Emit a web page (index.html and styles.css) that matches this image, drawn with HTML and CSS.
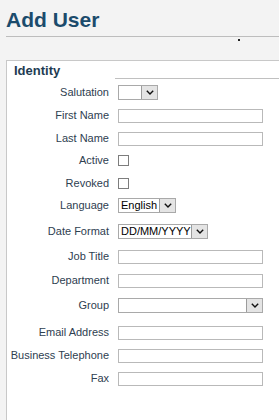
FILE: index.html
```html
<!DOCTYPE html>
<html lang="en">
<head>
    <meta charset="UTF-8">
    <meta name="viewport" content="width=device-width, initial-scale=1.0">
    <title>Add User</title>
    <link rel="stylesheet" href="styles.css">
</head>
<body>
    <h1 class="page-title">Add User</h1>
    <div class="stray"><span class="dot"></span></div>

    <div class="panel">
        <div class="legend">
            <div class="legend-text">Identity</div>
            <div class="legend-rule"></div>
        </div>

        <div class="row">
            <label class="lbl">Salutation</label>
            <div class="select sal">
                <span class="select-value"></span>
                <span class="select-arrow"><svg width="8" height="5" viewBox="0 0 8 5"><path d="M0.8 0.8 L4 4 L7.2 0.8" fill="none" stroke="#111" stroke-width="1.4"/></svg></span>
            </div>
        </div>
        <div class="row">
            <label class="lbl">First Name</label>
            <div class="text"></div>
        </div>
        <div class="row">
            <label class="lbl">Last Name</label>
            <div class="text"></div>
        </div>
        <div class="row gap-7">
            <label class="lbl">Active</label>
            <div class="check"></div>
        </div>
        <div class="row">
            <label class="lbl">Revoked</label>
            <div class="check"></div>
        </div>
        <div class="row gap-7">
            <label class="lbl">Language</label>
            <div class="select lang">
                <span class="select-value">English</span>
                <span class="select-arrow"><svg width="8" height="5" viewBox="0 0 8 5"><path d="M0.8 0.8 L4 4 L7.2 0.8" fill="none" stroke="#111" stroke-width="1.4"/></svg></span>
            </div>
        </div>
        <div class="row gap-11">
            <label class="lbl">Date Format</label>
            <div class="select datefmt">
                <span class="select-value">DD/MM/YYYY</span>
                <span class="select-arrow"><svg width="8" height="5" viewBox="0 0 8 5"><path d="M0.8 0.8 L4 4 L7.2 0.8" fill="none" stroke="#111" stroke-width="1.4"/></svg></span>
            </div>
        </div>
        <div class="row gap-10">
            <label class="lbl">Job Title</label>
            <div class="text"></div>
        </div>
        <div class="row gap-9">
            <label class="lbl">Department</label>
            <div class="text"></div>
        </div>
        <div class="row gap-10">
            <label class="lbl">Group</label>
            <div class="select group">
                <span class="select-value"></span>
                <span class="select-arrow"><svg width="8" height="5" viewBox="0 0 8 5"><path d="M0.8 0.8 L4 4 L7.2 0.8" fill="none" stroke="#111" stroke-width="1.4"/></svg></span>
            </div>
        </div>
        <div class="row gap-12">
            <label class="lbl">Email Address</label>
            <div class="text"></div>
        </div>
        <div class="row">
            <label class="lbl">Business Telephone</label>
            <div class="text"></div>
        </div>
        <div class="row">
            <label class="lbl">Fax</label>
            <div class="text"></div>
        </div>
    </div>
</body>
</html>
```

FILE: styles.css
```css
body {
    margin: 0;
    background-color: #f3f3f3;
    font-family: "Liberation Sans", Arial, sans-serif;
    font-size: 11px;
    color: #2e4050;
}
.page-title {
    margin: 0 0 0 6px;
    padding: 8px 0 4px 0;
    font-size: 21px;
    line-height: 24px;
    font-weight: bold;
    color: #1b4b6c;
    border-bottom: 1px solid #bdbdbd;
}
.stray {
    height: 21px;
}
.dot {
    display: block;
    width: 2px;
    height: 2px;
    margin: 2px 0 0 238px;
    background-color: #222;
}
.panel {
    margin-left: 6px;
    min-height: 361px;
    background-color: #fff;
    border-top: 1px solid #c8c8c8;
    border-left: 1px solid #c8c8c8;
    padding-top: 2px;
}
.legend {
    display: flex;
}
.legend-text {
    width: 101px;
    padding-left: 7px;
    font-size: 13px;
    line-height: 15px;
    font-weight: bold;
    color: #1e3c52;
}
.legend-rule {
    flex: 1;
    height: 15px;
    border-bottom: 1px solid #c0c0c0;
}
.row {
    display: flex;
    align-items: center;
    height: 15px;
    margin-top: 8px;
}
.legend + .row {
    margin-top: 6px;
}
.gap-7 { margin-top: 7px; }
.gap-9 { margin-top: 9px; }
.gap-10 { margin-top: 10px; }
.gap-11 { margin-top: 11px; }
.gap-12 { margin-top: 12px; }
.lbl {
    width: 102px;
    margin-right: 9px;
    text-align: right;
    white-space: nowrap;
    line-height: 15px;
}
.text {
    box-sizing: border-box;
    width: 145px;
    height: 14px;
    background-color: #fff;
    border: 1px solid #b9b9b9;
}
.check {
    box-sizing: border-box;
    width: 11px;
    height: 11px;
    background-color: #fff;
    border: 1px solid #7d7d7d;
}
.select {
    box-sizing: border-box;
    display: flex;
    height: 15px;
    background-color: #fff;
    border: 1px solid #a9a9a9;
    color: #000;
}
.select-value {
    flex: 1;
    padding-left: 2px;
    line-height: 13px;
    white-space: nowrap;
}
.select-arrow {
    box-sizing: border-box;
    width: 16px;
    height: 13px;
    display: flex;
    align-items: center;
    justify-content: center;
    background-color: #e4e4e4;
    border-left: 1px solid #9c9c9c;
}
.sal { width: 40px; }
.lang { width: 58px; }
.datefmt { width: 90px; }
.group { width: 145px; }
```
